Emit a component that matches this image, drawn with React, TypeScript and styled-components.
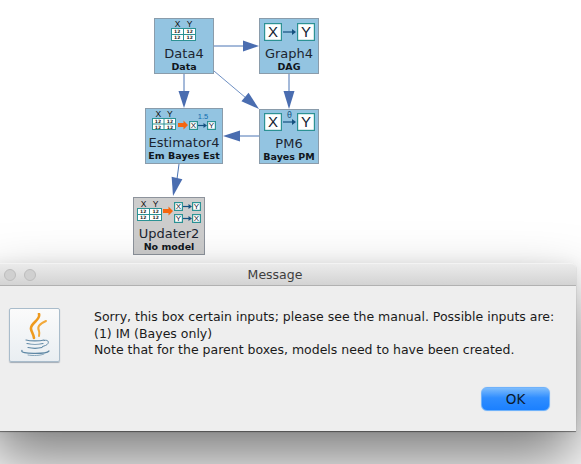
import React from "react";
import styled, { createGlobalStyle } from "styled-components";

const Global = createGlobalStyle`
  html, body { margin: 0; padding: 0; background: #fff; }
  body { font-family: "DejaVu Sans", "Liberation Sans", sans-serif; }
`;

const Page = styled.div`
  position: relative;
  width: 581px;
  height: 464px;
  overflow: hidden;
  background: #fff;
`;

const Edges = styled.svg`
  position: absolute;
  left: 0;
  top: 0;
  z-index: 2;
`;

const NodeBox = styled.div<{ $x: number; $y: number; $w: number; $h: number; $grey?: boolean }>`
  position: absolute;
  left: ${(p) => p.$x}px;
  top: ${(p) => p.$y}px;
  width: ${(p) => p.$w}px;
  height: ${(p) => p.$h}px;
  box-sizing: border-box;
  border: 1px solid ${(p) => (p.$grey ? "#8d939c" : "#8a9cab")};
  background: ${(p) => (p.$grey ? "#cdcdcd" : "#93c4e1")};
  display: flex;
  flex-direction: column;
  align-items: center;
  color: #1c2530;
`;

const NodeIcon = styled.svg`
  display: block;
  flex: none;
`;

const NodeTitle = styled.div<{ $drop: number }>`
  font-size: 13px;
  line-height: 14px;
  margin-top: ${(p) => p.$drop}px;
  white-space: nowrap;
`;

const NodeSub = styled.div`
  font-size: 9.5px;
  font-weight: 700;
  line-height: 12px;
  white-space: nowrap;
  color: #10161c;
`;

const Dialog = styled.div`
  position: absolute;
  left: -10px;
  top: 263px;
  width: 586px;
  height: 168px;
  z-index: 3;
  display: flex;
  flex-direction: column;
  border-radius: 5px 5px 0 0;
  background: #eeeeee;
  box-shadow: 0 1px 1px rgba(0, 0, 0, 0.45), 0 30px 60px 0 rgba(0, 0, 0, 0.5), 0 0 14px rgba(0, 0, 0, 0.06);
`;

const TitleBar = styled.div`
  position: relative;
  flex: none;
  height: 23px;
  box-sizing: border-box;
  display: flex;
  align-items: center;
  justify-content: center;
  padding-right: 16px;
  font-size: 12.5px;
  color: #3e3e3e;
  border-top: 1px solid #f3f3f3;
  border-bottom: 1px solid #b1b1b1;
  border-radius: 5px 5px 0 0;
  background: linear-gradient(#ebebeb, #d3d3d3);
`;

const Lights = styled.div`
  position: absolute;
  left: 14px;
  top: 5px;
  display: flex;
  gap: 8px;
`;

const Light = styled.span`
  width: 12px;
  height: 12px;
  box-sizing: border-box;
  border-radius: 50%;
  background: #d0d0d0;
  border: 1px solid #bdbdbd;
`;

const Body = styled.div`
  flex: 1;
  display: flex;
  padding: 22px 0 0 19px;
  min-height: 0;
`;

const IconFrame = styled.div`
  flex: none;
  width: 51px;
  height: 54px;
  box-sizing: border-box;
  border: 1px solid #a9bccb;
  border-radius: 2px;
  background: linear-gradient(#fbfbfb, #e9eef2);
  box-shadow: 0 1px 1px rgba(70, 90, 110, 0.45);
  display: flex;
  align-items: center;
  justify-content: center;
`;

const Message = styled.div`
  margin: 1px 0 0 34px;
  font-size: 12.5px;
  line-height: 16.6px;
  color: #1a1a1a;
  white-space: nowrap;
`;

const Footer = styled.div`
  flex: none;
  display: flex;
  justify-content: flex-end;
  padding: 0 26px 20px 0;
`;

const OkButton = styled.button`
  width: 69px;
  height: 24px;
  padding: 0;
  box-sizing: border-box;
  border: 1px solid #6fb2fb;
  border-radius: 6px;
  background: linear-gradient(#7dbcfc, #2f8dff 45%, #1b80ff);
  box-shadow: 0 0 1px #8fc3fb;
  color: #0c1a2c;
  font-family: inherit;
  font-size: 13.5px;
`;

const TEAL = "#2c9294";
const NAVY = "#15507f";

const DataTable = ({ x, y, w = 25, h = 13 }: { x: number; y: number; w?: number; h?: number }) => (
  <g>
    <text x={x + w * 0.26} y={y - 1} fontSize="8.5" textAnchor="middle" fill="#111" fontFamily="Liberation Sans">X</text>
    <text x={x + w * 0.74} y={y - 1} fontSize="8.5" textAnchor="middle" fill="#111" fontFamily="Liberation Sans">Y</text>
    <rect x={x + 0.5} y={y + 0.5} width={w - 1} height={h - 1} fill="#fff" stroke={TEAL} strokeWidth="1" />
    <path d={`M${x + w / 2} ${y}V${y + h}M${x} ${y + h / 2}H${x + w}`} stroke={TEAL} strokeWidth="1" />
    {[0, 1].map((c) =>
      [0, 1].map((r) => (
        <text key={`${c}${r}`} x={x + w * (0.25 + c * 0.5)} y={y + h * (0.25 + r * 0.5) + 1.7} fontSize="4.5" fontWeight="700" textAnchor="middle" fill="#222" fontFamily="DejaVu Sans">12</text>
      ))
    )}
  </g>
);

const VarBox = ({ x, y, s, t, f }: { x: number; y: number; s: number; t: string; f: number }) => (
  <g>
    <rect x={x + 0.6} y={y + 0.6} width={s - 1.2} height={s - 1.2} fill="#fff" stroke={TEAL} strokeWidth="1.2" />
    <text x={x + s / 2} y={y + s / 2 + f * 0.36} fontSize={f} textAnchor="middle" fill="#123" fontFamily="Liberation Sans">{t}</text>
  </g>
);

const SmallArrow = ({ x1, x2, y, size = 3 }: { x1: number; x2: number; y: number; size?: number }) => (
  <g>
    <path d={`M${x1} ${y}H${x2 - size}`} stroke={NAVY} strokeWidth="1.2" />
    <path d={`M${x2} ${y}l${-size - 1} ${-size}v${size * 2}z`} fill={NAVY} />
  </g>
);

const OrangeArrow = ({ x, y }: { x: number; y: number }) => (
  <path d={`M${x} ${y - 2}h5.5v-2.5l4.5 4.5l-4.5 4.5v-2.5h-5.5z`} fill="#f5660f" />
);

const DataIcon = () => (
  <NodeIcon width="58" height="23" viewBox="0 0 58 23">
    <DataTable x={16} y={9} />
  </NodeIcon>
);

const GraphIcon = () => (
  <NodeIcon width="58" height="23" viewBox="0 0 58 23">
    <VarBox x={4} y={4} s={18} t="X" f={15} />
    <SmallArrow x1={23} x2={36} y={13} />
    <VarBox x={37} y={4} s={18} t="Y" f={15} />
  </NodeIcon>
);

const PmIcon = () => (
  <NodeIcon width="58" height="23" viewBox="0 0 58 23">
    <VarBox x={4} y={3} s={18} t="X" f={15} />
    <SmallArrow x1={23} x2={36} y={12} />
    <text x={29.5} y={8} fontSize="8" textAnchor="middle" fill={NAVY} fontFamily="DejaVu Sans">θ</text>
    <VarBox x={37} y={3} s={18} t="Y" f={15} />
  </NodeIcon>
);

const EstimatorIcon = () => (
  <NodeIcon width="76" height="23" viewBox="0 0 76 23">
    <DataTable x={6} y={9} w={24} h={12} />
    <OrangeArrow x={32} y={16} />
    <VarBox x={43} y={12} s={9} t="X" f={8} />
    <SmallArrow x1={52} x2={61} y={16.5} size={2.5} />
    <text x={57} y={10} fontSize="7.5" textAnchor="middle" fill="#0f6cb0" fontFamily="Liberation Sans">1.5</text>
    <VarBox x={61} y={12} s={9} t="Y" f={8} />
  </NodeIcon>
);

const UpdaterIcon = () => (
  <NodeIcon width="70" height="26" viewBox="0 0 70 26">
    <DataTable x={3} y={10} w={25} h={13} />
    <OrangeArrow x={29} y={13} />
    <VarBox x={40} y={4} s={9} t="X" f={8} />
    <SmallArrow x1={49} x2={58} y={8.5} size={2.5} />
    <VarBox x={58} y={4} s={9} t="Y" f={8} />
    <VarBox x={40} y={16} s={9} t="Y" f={8} />
    <SmallArrow x1={49} x2={58} y={20.5} size={2.5} />
    <VarBox x={58} y={16} s={9} t="X" f={8} />
  </NodeIcon>
);

const JavaIcon = () => (
  <svg width="34" height="44" viewBox="0 0 34 44">
    <g fill="none" strokeLinecap="round">
      <path d="M21 1c2 6-9 9-8 15 .4 3 2.5 5 3 9" stroke="#ee9a1e" strokeWidth="2.6" />
      <path d="M28 8c-7 3-9 6-7 10 .5 1.5.5 3 0 5" stroke="#f2a93a" strokeWidth="2" />
      <path d="M8 27c4 1.2 14 1.2 18 0" stroke="#5f88a5" strokeWidth="1.2" />
      <path d="M9 30.5c4 1 12 1 16 0" stroke="#5f88a5" strokeWidth="1.2" />
      <path d="M10 34.5c4 .9 10 .9 14 0" stroke="#5f88a5" strokeWidth="1.2" />
      <path d="M26 27.5c5-1.5 6 3 1.5 5l-3 1" stroke="#5f88a5" strokeWidth="1" />
      <path d="M4 37.5c-3 3.5 24 4 27 .5" stroke="#5f88a5" strokeWidth="1.2" />
      <path d="M10 42c5 1 13 .6 16-1" stroke="#86a6bc" strokeWidth="1" />
    </g>
  </svg>
);

const Head = ({ tip, base }: { tip: [number, number]; base: [number, number] }) => {
  const dx = tip[0] - base[0];
  const dy = tip[1] - base[1];
  const len = Math.hypot(dx, dy);
  const nx = (-dy / len) * 5.5;
  const ny = (dx / len) * 5.5;
  return <polygon points={`${tip[0]},${tip[1]} ${base[0] + nx},${base[1] + ny} ${base[0] - nx},${base[1] - ny}`} fill="#4a6db0" />;
};

const EDGE = "#4a74b4";

export default function App() {
  return (
    <Page>
      <Global />
      <NodeBox $x={154} $y={18} $w={60} $h={56}>
        <DataIcon />
        <NodeTitle $drop={5}>Data4</NodeTitle>
        <NodeSub>Data</NodeSub>
      </NodeBox>
      <NodeBox $x={259} $y={18} $w={60} $h={56}>
        <GraphIcon />
        <NodeTitle $drop={5}>Graph4</NodeTitle>
        <NodeSub>DAG</NodeSub>
      </NodeBox>
      <NodeBox $x={145} $y={108} $w={78} $h={56}>
        <EstimatorIcon />
        <NodeTitle $drop={4}>Estimator4</NodeTitle>
        <NodeSub>Em Bayes Est</NodeSub>
      </NodeBox>
      <NodeBox $x={259} $y={109} $w={60} $h={55}>
        <PmIcon />
        <NodeTitle $drop={4}>PM6</NodeTitle>
        <NodeSub>Bayes PM</NodeSub>
      </NodeBox>
      <NodeBox $x={133} $y={197} $w={72} $h={58} $grey>
        <UpdaterIcon />
        <NodeTitle $drop={3}>Updater2</NodeTitle>
        <NodeSub>No model</NodeSub>
      </NodeBox>
      <Edges width="581" height="264" viewBox="0 0 581 264">
        <g stroke={EDGE} fill="none">
          <path d="M214 46H245" strokeWidth="1" />
          <path d="M214 71L246 98" strokeWidth="0.8" />
          <path d="M184 74V92" strokeWidth="1" />
          <path d="M289 74V92" strokeWidth="1" />
          <path d="M259 136H240" strokeWidth="1" />
          <path d="M179 164L177 179" strokeWidth="1" />
        </g>
        <Head tip={[259, 46]} base={[243, 46]} />
        <Head tip={[259, 109]} base={[245, 97]} />
        <Head tip={[184, 108]} base={[184, 91]} />
        <Head tip={[289, 109]} base={[289, 91]} />
        <Head tip={[223, 136]} base={[240, 136]} />
        <Head tip={[173, 196]} base={[177, 178]} />
      </Edges>
      <Dialog>
        <TitleBar>
          <Lights>
            <Light />
            <Light />
          </Lights>
          Message
        </TitleBar>
        <Body>
          <IconFrame>
            <JavaIcon />
          </IconFrame>
          <Message>
            Sorry, this box certain inputs; please see the manual. Possible inputs are:
            <br />
            (1) IM (Bayes only)
            <br />
            Note that for the parent boxes, models need to have been created.
          </Message>
        </Body>
        <Footer>
          <OkButton>OK</OkButton>
        </Footer>
      </Dialog>
    </Page>
  );
}
